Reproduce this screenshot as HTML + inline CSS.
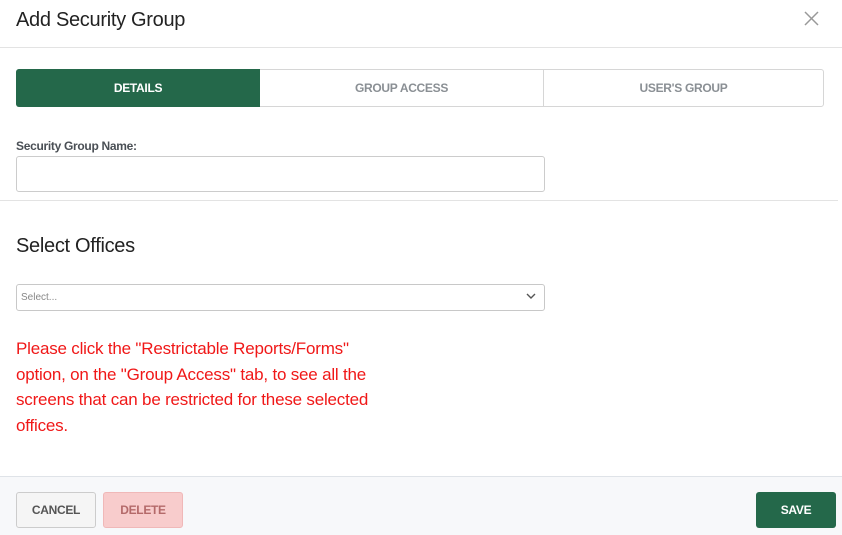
<!DOCTYPE html>
<html><head><style>
*{box-sizing:border-box;margin:0;padding:0}
body{width:842px;height:535px;background:#fff;font-family:"Liberation Sans",sans-serif;position:relative;overflow:hidden}
.a{position:absolute}
.t{font-size:12px;font-weight:bold;color:#6b7178;letter-spacing:-0.3px;display:flex;align-items:center;justify-content:center}
</style></head><body>
<div class="a" style="left:16px;top:9px;font-size:20px;color:#222;letter-spacing:-0.3px">Add Security Group</div>
<svg class="a" style="left:804px;top:11px" width="15" height="15"><path d="M1 1L14 14M14 1L1 14" stroke="#999" stroke-width="1.5"/></svg>
<div class="a" style="left:0;top:47px;width:842px;height:1px;background:#e3e3e3"></div>
<div class="a" style="left:16px;top:69px;width:808px;height:38px;border:1px solid #d6d6d6;border-radius:3px"></div>
<div class="a t" style="left:16px;top:69px;width:244px;height:38px;background:#24684a;color:#fff;border-radius:3px 0 0 3px">DETAILS</div>
<div class="a t" style="left:260px;top:70px;width:283px;height:36px;color:#8a8f94">GROUP ACCESS</div>
<div class="a" style="left:543px;top:70px;width:1px;height:36px;background:#d6d6d6"></div>
<div class="a t" style="left:544px;top:70px;width:279px;height:36px;color:#8a8f94">USER'S GROUP</div>
<div class="a" style="left:16px;top:139px;font-size:12px;font-weight:bold;color:#4a4f55;letter-spacing:-0.3px">Security Group Name:</div>
<div class="a" style="left:16px;top:156px;width:529px;height:36px;border:1px solid #ccc;border-radius:3px"></div>
<div class="a" style="left:0;top:200px;width:838px;height:1px;background:#e3e3e3"></div>
<div class="a" style="left:16px;top:235px;font-size:20px;color:#222;letter-spacing:-0.3px">Select Offices</div>
<div class="a" style="left:16px;top:284px;width:529px;height:27px;border:1px solid #c8c8c8;border-radius:3px;font-size:10px;color:#888;padding:7px 0 0 4px">Select...</div>
<svg class="a" style="left:526px;top:293px" width="10" height="7"><path d="M1 1L5 5L9 1" stroke="#555" stroke-width="1.4" fill="none"/></svg>
<div class="a" style="left:16px;top:336px;white-space:nowrap;font-size:17px;line-height:25.5px;color:#f01818;letter-spacing:-0.2px">Please click the "Restrictable Reports/Forms"<br>option, on the "Group Access" tab, to see all the<br>screens that can be restricted for these selected<br>offices.</div>
<div class="a" style="left:0;top:476px;width:842px;height:59px;background:#f7f8fa;border-top:1px solid #dfe3e8"></div>
<div class="a t" style="left:16px;top:492px;width:80px;height:36px;background:#f5f5f5;border:1px solid #ccc;border-radius:3px;color:#555">CANCEL</div>
<div class="a t" style="left:103px;top:492px;width:80px;height:36px;background:#f8cccc;border:1px solid #f0b8b8;border-radius:3px;color:#b46a6a">DELETE</div>
<div class="a t" style="left:756px;top:492px;width:80px;height:36px;background:#24684a;border-radius:3px;color:#fff">SAVE</div>
</body></html>
